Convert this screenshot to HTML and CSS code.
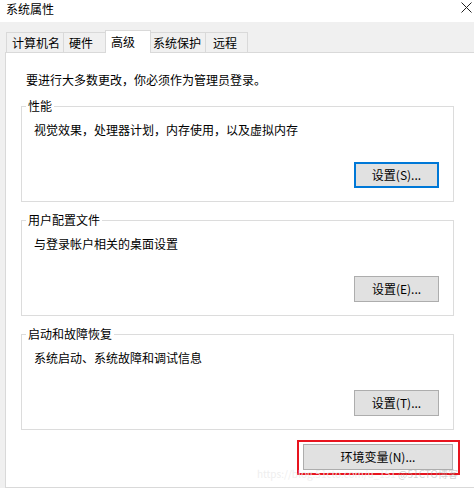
FILE: index.html
```html
<!DOCTYPE html>
<html lang="zh-CN">
<head>
<meta charset="utf-8">
<title>系统属性</title>
<link rel="stylesheet" href="styles.css">
</head>
<body>
<div class="window">
  <div class="titlebar">
    <span class="title">系统属性</span>
    <svg class="close" width="11" height="11" viewBox="0 0 11 11"><path d="M0.5 0.5 L10.5 10.5 M10.5 0.5 L0.5 10.5" stroke="#222" stroke-width="1" fill="none"/></svg>
  </div>
  <div class="dialog">
    <div class="tabs">
      <div class="tab tab-name">计算机名</div>
      <div class="tab tab-hw">硬件</div>
      <div class="tab tab-active">高级</div>
      <div class="tab tab-protect">系统保护</div>
      <div class="tab tab-remote">远程</div>
    </div>
    <div class="panel">
      <p class="notice">要进行大多数更改，你必须作为管理员登录。</p>
      <fieldset class="group">
        <legend>性能</legend>
        <p class="desc">视觉效果，处理器计划，内存使用，以及虚拟内存</p>
        <div class="actions"><button class="btn btn-default">设置(S)...</button></div>
      </fieldset>
      <fieldset class="group">
        <legend>用户配置文件</legend>
        <p class="desc">与登录帐户相关的桌面设置</p>
        <div class="actions"><button class="btn">设置(E)...</button></div>
      </fieldset>
      <fieldset class="group">
        <legend>启动和故障恢复</legend>
        <p class="desc">系统启动、系统故障和调试信息</p>
        <div class="actions"><button class="btn">设置(T)...</button></div>
      </fieldset>
      <div class="env-row">
        <div class="highlight"><button class="btn btn-env">环境变量(N)...</button></div>
      </div>
    </div>
  </div>
  <div class="watermark">https://blog.51cto.com/u_151 <span class="wm-brand">@51CTO博客</span></div>
</div>
</body>
</html>
```
FILE: styles.css
```css
* { box-sizing: border-box; }
html, body { margin: 0; padding: 0; }
body {
  width: 474px;
  height: 488px;
  overflow: hidden;
  font-family: "Noto Sans CJK SC", "Noto Sans", sans-serif;
  font-size: 12px;
  color: #000;
  background: #f0f0f0;
}
.window { position: relative; width: 474px; height: 488px; overflow: hidden; }
.titlebar {
  height: 22px;
  background: #fff;
  display: flex;
  align-items: flex-start;
  justify-content: space-between;
  padding: 0 2px 0 6px;
}
.title { line-height: 18px; }
.close { margin-top: 2px; }
.dialog { padding: 8px 0 0 5px; height: 466px; display: flex; flex-direction: column; }
.tabs {
  display: flex;
  align-items: flex-end;
  height: 22px;
  padding-left: 1px;
}
.tab {
  height: 20px;
  line-height: 19px;
  border: 1px solid #d9d9d9;
  border-bottom: none;
  background: #f0f0f0;
  padding-left: 5px;
  margin-left: -1px;
  white-space: nowrap;
}
.tab:first-child { margin-left: 0; }
.tab-name { width: 58px; }
.tab-hw { width: 43px; }
.tab-active {
  width: 46px;
  height: 23px;
  line-height: 21px;
  background: #fff;
  margin-bottom: -1px;
  position: relative;
  z-index: 1;
}
.tab-protect { width: 56px; padding-left: 2px; }
.tab-remote { width: 43px; padding-left: 7px; }
.panel {
  flex: 1;
  background: #fff;
  border: 1px solid #d9d9d9;
  border-right: none;
  padding: 0 0 0 15px;
}
.notice { margin: 19px 0 0 5px; line-height: 16px; }
.group {
  width: 433px;
  margin: 10px 0 0 0;
  padding: 8px 0 13px 0;
  border: 1px solid #dcdcdc;
  min-inline-size: 0;
}
.group legend {
  margin-left: 4px;
  padding: 0 2px;
  line-height: 16px;
}
.desc { margin: 0 0 0 12px; line-height: 16px; }
.actions {
  display: flex;
  justify-content: flex-end;
  padding-right: 14px;
  margin-top: 24px;
}
.btn {
  width: 85px;
  height: 26px;
  background: #e1e1e1;
  border: 1px solid #adadad;
  font-family: "Noto Sans CJK SC", "Noto Sans", sans-serif;
  font-size: 12px;
  color: #000;
  padding: 0;
  line-height: 22px;
}
.btn-default { border: 2px solid #0078d7; }
.env-row { margin: 10px 0 0 276px; display: flex; }
.highlight {
  border: 2px solid #e8141e;
  padding: 2px 5px 3px 4px;
}
.btn-env { width: 150px; height: 26px; }
.watermark {
  position: absolute;
  right: 16px;
  top: 467px;
  font-size: 10px;
  line-height: 13px;
  color: rgba(235, 235, 235, 0.85);
  white-space: nowrap;
}
.wm-brand { color: rgba(170, 170, 170, 0.55); }
```
